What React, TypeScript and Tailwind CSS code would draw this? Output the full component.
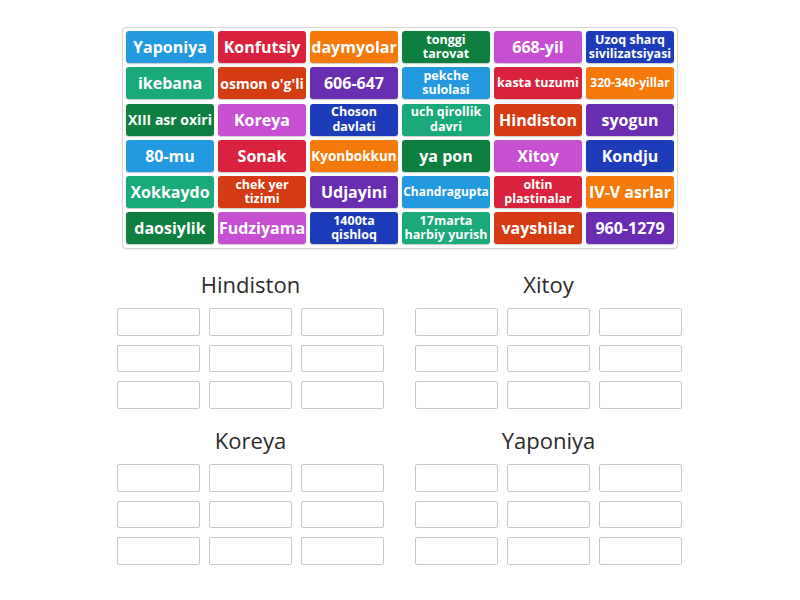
import React from "react";

type Tile = { text: string; color: string; size?: string };

const BLUE = "bg-[#239ae0]";
const RED = "bg-[#d9223d]";
const ORANGE = "bg-[#f47a0c]";
const TEAL = "bg-[#1aa97b]";
const RUST = "bg-[#d53c14]";
const PURPLE = "bg-[#6a2cb1]";
const GREEN = "bg-[#0e7f3f]";
const PINK = "bg-[#c74fd2]";
const NAVY = "bg-[#1d3cb9]";

// two-line labels
const TWO = "text-[12.5px] leading-[14.5px]";

const tiles: Tile[] = [
  { text: "Yaponiya", color: BLUE },
  { text: "Konfutsiy", color: RED },
  { text: "daymyolar", color: ORANGE },
  { text: "tonggi tarovat", color: GREEN, size: TWO },
  { text: "668-yil", color: PINK },
  { text: "Uzoq sharq sivilizatsiyasi", color: NAVY, size: TWO },

  { text: "ikebana", color: TEAL },
  { text: "osmon o'g'li", color: RUST, size: "text-[14px] whitespace-nowrap" },
  { text: "606-647", color: PURPLE },
  { text: "pekche sulolasi", color: BLUE, size: TWO },
  { text: "kasta tuzumi", color: RED, size: "text-[12.5px] whitespace-nowrap" },
  { text: "320-340-yillar", color: ORANGE, size: "text-[12px] whitespace-nowrap" },

  { text: "XIII asr oxiri", color: GREEN, size: "text-[14px] whitespace-nowrap" },
  { text: "Koreya", color: PINK },
  { text: "Choson davlati", color: NAVY, size: TWO },
  { text: "uch qirollik davri", color: TEAL, size: TWO },
  { text: "Hindiston", color: RUST },
  { text: "syogun", color: PURPLE },

  { text: "80-mu", color: BLUE },
  { text: "Sonak", color: RED },
  { text: "Kyonbokkun", color: ORANGE, size: "text-[13.5px] whitespace-nowrap" },
  { text: "ya pon", color: GREEN },
  { text: "Xitoy", color: PINK },
  { text: "Kondju", color: NAVY },

  { text: "Xokkaydo", color: TEAL },
  { text: "chek yer tizimi", color: RUST, size: TWO },
  { text: "Udjayini", color: PURPLE },
  { text: "Chandragupta", color: BLUE, size: "text-[12px] whitespace-nowrap" },
  { text: "oltin plastinalar", color: RED, size: TWO },
  { text: "IV-V asrlar", color: ORANGE },

  { text: "daosiylik", color: GREEN },
  { text: "Fudziyama", color: PINK },
  { text: "1400ta qishloq", color: NAVY, size: TWO },
  { text: "17marta harbiy yurish", color: TEAL, size: TWO },
  { text: "vayshilar", color: RUST },
  { text: "960-1279", color: PURPLE },
];

const groups = ["Hindiston", "Xitoy", "Koreya", "Yaponiya"];

function DropGroup({ title }: { title: string }) {
  return (
    <div className="flex flex-col items-center">
      <div className="h-[30px] text-[22px] leading-[30px] text-[#2a2a2a]">{title}</div>
      <div className="mt-[9px] grid grid-cols-3 gap-x-[9px] gap-y-[9px]">
        {Array.from({ length: 9 }).map((_, i) => (
          <div
            key={i}
            className="h-[27.5px] w-[83px] rounded-[2px] border border-[#c8c8c8] bg-white"
          />
        ))}
      </div>
    </div>
  );
}

export default function App() {
  return (
    <div
      className="flex min-h-[600px] w-full flex-col items-center bg-white pt-[27px]"
      style={{ fontFamily: "'Open Sans', sans-serif" }}
    >
      <div className="grid grid-cols-6 gap-x-[4px] gap-y-[4.3px] rounded-[4px] border border-[#d6d6d6] bg-white px-[3px] pt-[3px] pb-[4px] shadow-[0_1px_2px_rgba(0,0,0,0.08)]">
        {tiles.map((t, i) => (
          <div
            key={i}
            className={`${t.color} flex h-[32px] w-[88px] items-center justify-center rounded-[3px] text-center font-bold text-white shadow-[0_1px_1px_rgba(0,0,0,0.2)] ${
              t.size ?? "text-[16px] leading-[20px] whitespace-nowrap"
            }`}
          >
            <span>{t.text}</span>
          </div>
        ))}
      </div>

      <div className="mt-[20px] ml-[-1px] grid grid-cols-2 gap-x-[31px] gap-y-[16.5px]">
        {groups.map((g) => (
          <DropGroup key={g} title={g} />
        ))}
      </div>
    </div>
  );
}
